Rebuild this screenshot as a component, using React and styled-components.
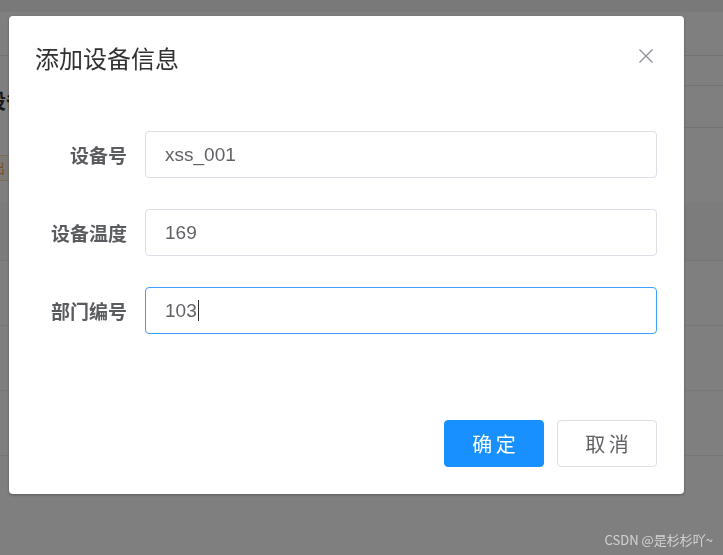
import React from "react";
import styled, { createGlobalStyle } from "styled-components";

const GlobalStyle = createGlobalStyle`
  html, body {
    margin: 0;
    padding: 0;
    overflow: hidden;
    background: #fff;
  }
  body {
    font-family: "Liberation Sans", "Noto Sans CJK SC", sans-serif;
  }
`;

/* ---------- page under the mask ---------- */

const Page = styled.div`
  width: 723px;
  height: 555px;
  overflow: hidden;
  background: #fff;
`;

const TopStrip = styled.div`
  height: 12px;
  background: #f3f3f3;
`;

const Header = styled.div`
  height: 43px;
  border-bottom: 1px solid #e4e4e4;
`;

const HeadingRow = styled.div`
  display: flex;
  justify-content: space-between;
  align-items: flex-start;
  height: 72px;
`;

const Heading = styled.h2`
  margin: 30px 0 0 -14px;
  font-size: 20px;
  font-weight: bold;
  color: #303133;
`;

const SearchBox = styled.div`
  margin-top: 29px;
  width: 120px;
  height: 41px;
  border-top: 1px solid #e4e7ed;
  border-bottom: 1px solid #e4e7ed;
`;

const ToolRow = styled.div`
  display: flex;
  height: 74px;
  padding-top: 27px;
  box-sizing: border-box;
`;

const WarnButton = styled.div`
  margin-left: -30px;
  height: 24px;
  padding: 0 6px;
  border: 1px solid #f5dab1;
  background: #fdf6ec;
  color: #e6a23c;
  font-size: 14px;
  line-height: 24px;
`;

const TableHead = styled.div`
  height: 58px;
  background: #f8f8f8;
`;

const TableRow = styled.div`
  height: 64px;
  border-top: 1px solid #ebeef5;
`;

/* ---------- mask & dialog ---------- */

const Mask = styled.div`
  position: fixed;
  inset: 0;
  background: rgba(0, 0, 0, 0.5);
`;

const Dialog = styled.div`
  position: relative;
  margin: 16px 0 0 9px;
  width: 675px;
  height: 478px;
  box-sizing: border-box;
  background: #fff;
  border-radius: 4px;
  box-shadow: 0 1px 3px rgba(0, 0, 0, 0.3);
  display: flex;
  flex-direction: column;
  padding: 29px 27px 27px 27px;
`;

const DialogHeader = styled.div`
  display: flex;
  justify-content: space-between;
  align-items: center;
  height: 26px;
`;

const Title = styled.span`
  font-family: "Noto Sans CJK SC", sans-serif;
  font-size: 24px;
  line-height: 26px;
  color: #303133;
  margin-left: -1px;
`;

const CloseButton = styled.button`
  border: none;
  background: none;
  padding: 0;
  margin: -4px 3px 0 0;
  width: 16px;
  height: 16px;
  display: flex;
  align-items: center;
  justify-content: center;
  cursor: pointer;
`;

const Form = styled.div`
  display: flex;
  flex-direction: column;
  gap: 31px;
  margin-top: 60px;
`;

const Row = styled.div`
  display: flex;
  align-items: center;
`;

const Label = styled.label`
  width: 109px;
  padding-right: 18px;
  box-sizing: border-box;
  text-align: right;
  font-family: "Noto Sans CJK SC", sans-serif;
  font-weight: bold;
  font-size: 19px;
  color: #5a5c60;
`;

const InputBox = styled.div`
  flex: 1;
  height: 47px;
  box-sizing: border-box;
  border: 1px solid ${(p) => (p.$focused ? "#409eff" : "#dcdfe6")};
  border-radius: 4px;
  padding: 0 19px;
  display: flex;
  align-items: center;
  font-size: 19px;
  color: #606266;
`;

const Caret = styled.span`
  display: inline-block;
  width: 1px;
  height: 21px;
  margin-left: 1px;
  background: #303133;
`;

const Footer = styled.div`
  margin-top: auto;
  display: flex;
  justify-content: flex-end;
  gap: 13px;
`;

const Button = styled.button`
  width: 100px;
  height: 47px;
  border-radius: 4px;
  font-family: "Noto Sans CJK SC", sans-serif;
  font-size: 20px;
  letter-spacing: 0.18em;
  text-indent: 0.18em;
  cursor: pointer;
  border: 1px solid ${(p) => (p.$primary ? "#1890ff" : "#dcdfe6")};
  background: ${(p) => (p.$primary ? "#1890ff" : "#fff")};
  color: ${(p) => (p.$primary ? "#fff" : "#606266")};
`;

const Watermark = styled.span`
  position: absolute;
  right: 10px;
  bottom: 6px;
  font-family: "Noto Sans CJK SC", sans-serif;
  font-size: 13px;
  color: rgba(255, 255, 255, 0.65);
`;

const fields = [
  { label: "设备号", value: "xss_001" },
  { label: "设备温度", value: "169" },
  { label: "部门编号", value: "103", focused: true },
];

function CloseIcon() {
  return (
    <svg width="16" height="16" viewBox="0 0 16 16">
      <path d="M1.5 1.5 L14.5 14.5 M14.5 1.5 L1.5 14.5" stroke="#909399" strokeWidth="1.4" />
    </svg>
  );
}

export default function App() {
  return (
    <>
      <GlobalStyle />
      <Page>
        <TopStrip />
        <Header />
        <HeadingRow>
          <Heading>设备信息管理</Heading>
          <SearchBox />
        </HeadingRow>
        <ToolRow>
          <WarnButton>导出</WarnButton>
        </ToolRow>
        <TableHead />
        <TableRow />
        <TableRow />
        <TableRow />
        <TableRow />
      </Page>
      <Mask>
        <Dialog>
          <DialogHeader>
            <Title>添加设备信息</Title>
            <CloseButton aria-label="关闭">
              <CloseIcon />
            </CloseButton>
          </DialogHeader>
          <Form>
            {fields.map((f) => (
              <Row key={f.label}>
                <Label>{f.label}</Label>
                <InputBox $focused={f.focused}>
                  {f.value}
                  {f.focused && <Caret />}
                </InputBox>
              </Row>
            ))}
          </Form>
          <Footer>
            <Button $primary>确定</Button>
            <Button>取消</Button>
          </Footer>
        </Dialog>
        <Watermark>CSDN @是杉杉吖~</Watermark>
      </Mask>
    </>
  );
}
